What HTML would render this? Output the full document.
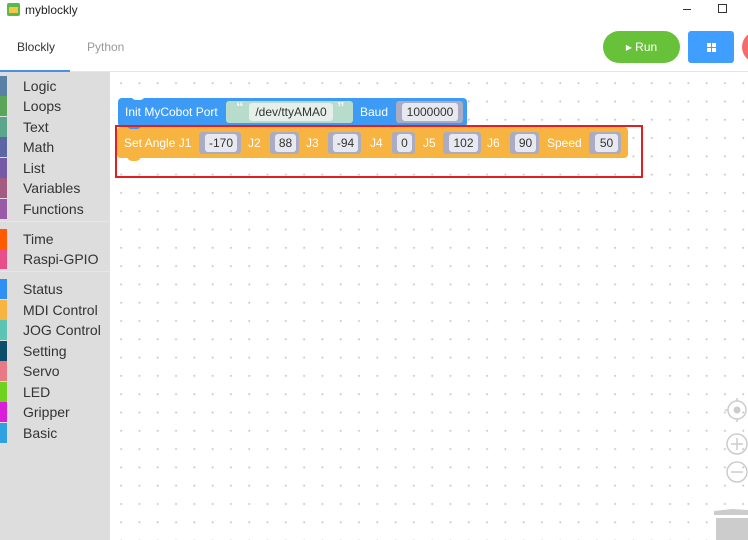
<!DOCTYPE html>
<html><head><meta charset="utf-8"><style>
*{margin:0;padding:0;box-sizing:border-box}
body{width:748px;height:540px;overflow:hidden;background:#fff;font-family:"Liberation Sans","Noto Sans CJK SC",sans-serif;position:relative}
.a{position:absolute}
.side{left:0;top:72px;width:110px;height:468px;background:#dddddd}
.it{position:absolute;left:0;height:20px;font-size:14px;color:#333;line-height:20px}
.it i{position:absolute;left:0;top:0;width:7px;height:20px}
.it span{position:absolute;left:23px;white-space:nowrap}
.canvas{left:110px;top:72px;width:638px;height:468px;background-color:#fff;background-image:radial-gradient(circle,#c8c8c8 0.8px,transparent 1.2px);background-size:18.3px 18.3px;background-position:2px 2px}
.lbl{position:absolute;color:#fff;font-size:12px;line-height:14px;white-space:nowrap}
.slot{position:absolute;background:#a9acc2;border-radius:3px}
.fld{position:absolute;background:#e8e9f0;border-radius:3px;font-size:12px;color:#333;text-align:center;line-height:18px}
</style></head><body>
<div class="a" style="left:7px;top:3px;width:13px;height:13px;background:#5bb84a;border-radius:2px"></div>
<div class="a" style="left:9px;top:7px;width:9px;height:6px;background:#f5c842"></div>
<div class="a" style="left:25px;top:3px;font-size:12px;color:#222">myblockly</div>
<div class="a" style="left:683px;top:9px;width:8px;height:1px;background:#333"></div>
<div class="a" style="left:718px;top:4px;width:9px;height:9px;border:1px solid #333"></div>
<div class="a" style="left:17px;top:40px;font-size:12px;color:#333">Blockly</div>
<div class="a" style="left:87px;top:40px;font-size:12px;color:#999">Python</div>
<div class="a" style="left:0;top:70px;width:70px;height:2px;background:#4a90e2"></div>
<div class="a" style="left:70px;top:71px;width:678px;height:1px;background:#e4e4e4"></div>
<div class="a" style="left:603px;top:31px;width:77px;height:32px;background:#67c23a;border-radius:16px;color:#fff;font-size:12px;line-height:32px;text-align:center">▸ Run</div>
<div class="a" style="left:688px;top:31px;width:46px;height:32px;background:#409eff;border-radius:3px"></div>
<div class="a" style="left:707px;top:43px;width:4px;height:4px;background:#fff;box-shadow:5px 0 #fff,0 5px #fff,5px 5px #fff"></div>
<div class="a" style="left:742px;top:31px;width:32px;height:32px;background:#f56c6c;border-radius:16px"></div>
<div class="a side">
<div class="it" style="top:4px"><i style="background:#5b80a5"></i><span>Logic</span></div>
<div class="it" style="top:24px"><i style="background:#5ba55b"></i><span>Loops</span></div>
<div class="it" style="top:45px"><i style="background:#5ba58c"></i><span>Text</span></div>
<div class="it" style="top:65px"><i style="background:#5b67a5"></i><span>Math</span></div>
<div class="it" style="top:86px"><i style="background:#745ba5"></i><span>List</span></div>
<div class="it" style="top:106px"><i style="background:#a55b80"></i><span>Variables</span></div>
<div class="it" style="top:127px"><i style="background:#995ba5"></i><span>Functions</span></div>
<div class="a" style="left:0;top:149px;width:110px;height:1px;background:#e6e6e6"></div>
<div class="it" style="top:157px"><i style="background:#ff5a00"></i><span>Time</span></div>
<div class="it" style="top:177px"><i style="background:#e84f8a"></i><span>Raspi-GPIO</span></div>
<div class="a" style="left:0;top:199px;width:110px;height:1px;background:#e6e6e6"></div>
<div class="it" style="top:207px"><i style="background:#2e8ff5"></i><span>Status</span></div>
<div class="it" style="top:228px"><i style="background:#f8b440"></i><span>MDI Control</span></div>
<div class="it" style="top:248px"><i style="background:#5bc4b4"></i><span>JOG Control</span></div>
<div class="it" style="top:269px"><i style="background:#0d4f6a"></i><span>Setting</span></div>
<div class="it" style="top:289px"><i style="background:#e87a85"></i><span>Servo</span></div>
<div class="it" style="top:310px"><i style="background:#6fd21e"></i><span>LED</span></div>
<div class="it" style="top:330px"><i style="background:#d81ed8"></i><span>Gripper</span></div>
<div class="it" style="top:351px"><i style="background:#2fa0e0"></i><span>Basic</span></div>
</div>
<div class="a canvas"></div>
<!-- blue block -->
<div class="a" style="left:118px;top:98px;width:349px;height:29px;background:#3d9bf5;border-radius:4px"></div>
<div class="a" style="left:131px;top:95px;width:14px;height:5px;background:#fff;border-radius:0 0 6px 6px"></div>
<div class="lbl" style="left:125px;top:105px">Init MyCobot Port</div>
<div class="slot" style="left:226px;top:101px;width:127px;height:22px;background:#b8dccc"></div>
<div class="lbl" style="left:236px;top:101px;color:#f4f4f4;font-size:15px;font-weight:bold">“</div>
<div class="fld" style="left:249px;top:103px;width:84px;height:18px;background:#e6efe9">/dev/ttyAMA0</div>
<div class="lbl" style="left:337px;top:101px;color:#f4f4f4;font-size:15px;font-weight:bold">”</div>
<div class="lbl" style="left:360px;top:105px">Baud</div>
<div class="slot" style="left:396px;top:101px;width:67px;height:22px"></div>
<div class="fld" style="left:402px;top:103px;width:56px;height:18px">1000000</div>
<!-- orange block -->
<div class="a" style="left:117px;top:127px;width:511px;height:31px;background:#f8b440;border-radius:4px"></div>
<div class="a" style="left:127px;top:156px;width:14px;height:5px;background:#f8b440;border-radius:0 0 6px 6px"></div>
<div class="a" style="left:127px;top:125px;width:14px;height:4px;background:#3d9bf5;border-radius:0 0 6px 6px"></div>
<div class="lbl" style="left:124px;top:136px">Set Angle J1</div>
<div class="slot" style="left:199px;top:132px;width:42px;height:22px"></div><div class="fld" style="left:205px;top:134px;width:32px;height:18px">-170</div>
<div class="lbl" style="left:248px;top:136px">J2</div>
<div class="slot" style="left:270px;top:132px;width:29px;height:22px"></div><div class="fld" style="left:275px;top:134px;width:21px;height:18px">88</div>
<div class="lbl" style="left:306px;top:136px">J3</div>
<div class="slot" style="left:328px;top:132px;width:33px;height:22px"></div><div class="fld" style="left:333px;top:134px;width:25px;height:18px">-94</div>
<div class="lbl" style="left:370px;top:136px">J4</div>
<div class="slot" style="left:392px;top:132px;width:23px;height:22px"></div><div class="fld" style="left:397px;top:134px;width:15px;height:18px">0</div>
<div class="lbl" style="left:423px;top:136px">J5</div>
<div class="slot" style="left:443px;top:132px;width:38px;height:22px"></div><div class="fld" style="left:449px;top:134px;width:29px;height:18px">102</div>
<div class="lbl" style="left:487px;top:136px">J6</div>
<div class="slot" style="left:510px;top:132px;width:29px;height:22px"></div><div class="fld" style="left:515px;top:134px;width:21px;height:18px">90</div>
<div class="lbl" style="left:547px;top:136px">Speed</div>
<div class="slot" style="left:589px;top:132px;width:32px;height:22px"></div><div class="fld" style="left:595px;top:134px;width:23px;height:18px">50</div>
<div class="a" style="left:115px;top:125px;width:528px;height:53px;border:2px solid #e02020"></div>
<!-- controls -->
<svg class="a" style="left:714px;top:395px" width="34" height="145" viewBox="0 0 34 145">
<g fill="none" stroke="#ccc" stroke-width="1.5">
<circle cx="23" cy="15" r="9"/><line x1="23" y1="3" x2="23" y2="6"/><line x1="23" y1="24" x2="23" y2="27"/><line x1="11" y1="15" x2="14" y2="15"/>
<circle cx="23" cy="49" r="10"/><line x1="17" y1="49" x2="29" y2="49"/><line x1="23" y1="43" x2="23" y2="55"/>
<circle cx="23" cy="77" r="10"/><line x1="17" y1="77" x2="29" y2="77"/>
</g>
<circle cx="23" cy="15" r="3.5" fill="#ccc"/>
<path d="M0 116 L18 114 L34 115 L34 120 L0 120Z" fill="#ccc"/>
<rect x="2" y="123" width="32" height="22" fill="#ccc"/>
</svg>
</body></html>
